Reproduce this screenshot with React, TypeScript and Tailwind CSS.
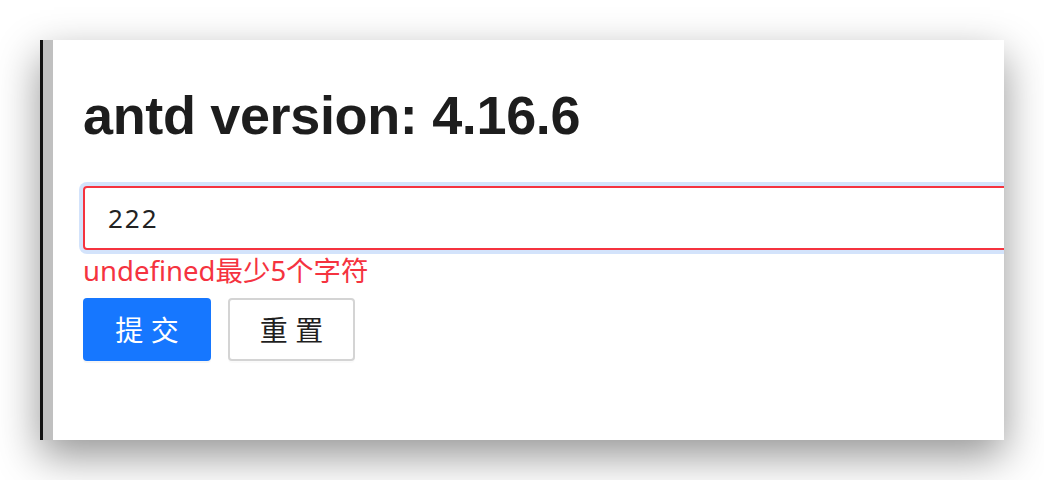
export default function App() {
  const body = "font-['Noto_Sans','Noto_Sans_CJK_SC',sans-serif]";

  return (
    <div className="w-[1044px] h-[480px] bg-white p-[40px]">
      {/* Window */}
      <div className="flex w-[964px] h-[400px] overflow-hidden bg-white shadow-[0_16px_40px_rgba(0,0,0,0.42)]">
        <div className="w-[3px] shrink-0 bg-[#111]" />
        <div className="w-[10px] shrink-0 bg-[#c0c0c0]" />

        <div className="flex min-w-0 flex-1 flex-col pl-[30px] pt-[46px]">
          <h1 className="whitespace-nowrap font-['Liberation_Sans',Arial,sans-serif] text-[54px] font-bold leading-[59px] tracking-[-0.35px] text-[#1d1d1d]">
            antd version: 4.16.6
          </h1>

          {/* Input with error state */}
          <div className="mt-[41px] flex h-[64px] w-[1000px] shrink-0 items-center rounded-[4px] border-2 border-[#f5333f] pl-[23px] shadow-[0_0_0_4px_#d3e3fb]">
            <span className={`${body} text-[26px] leading-[60px] tracking-[2px] text-[#222]`}>
              222
            </span>
          </div>

          <div className={`${body} mt-[5px] h-[32px] whitespace-nowrap text-[27.5px] leading-[32px] text-[#f5333f]`}>
            undefined最少5个字符
          </div>

          {/* Actions */}
          <div className="mt-[11px] flex gap-[17px]">
            <button className={`${body} flex h-[63px] w-[128px] items-center justify-center rounded-[4px] bg-[#1677ff] text-[28px] text-white shadow-[0_2px_0_rgba(0,0,0,0.04)]`}>
              提 交
            </button>
            <button className={`${body} flex h-[63px] w-[127px] items-center justify-center rounded-[4px] border-2 border-[#d4d4d4] bg-white text-[28px] text-[#1f1f1f] shadow-[0_2px_0_rgba(0,0,0,0.02)]`}>
              重 置
            </button>
          </div>
        </div>
      </div>
    </div>
  );
}
